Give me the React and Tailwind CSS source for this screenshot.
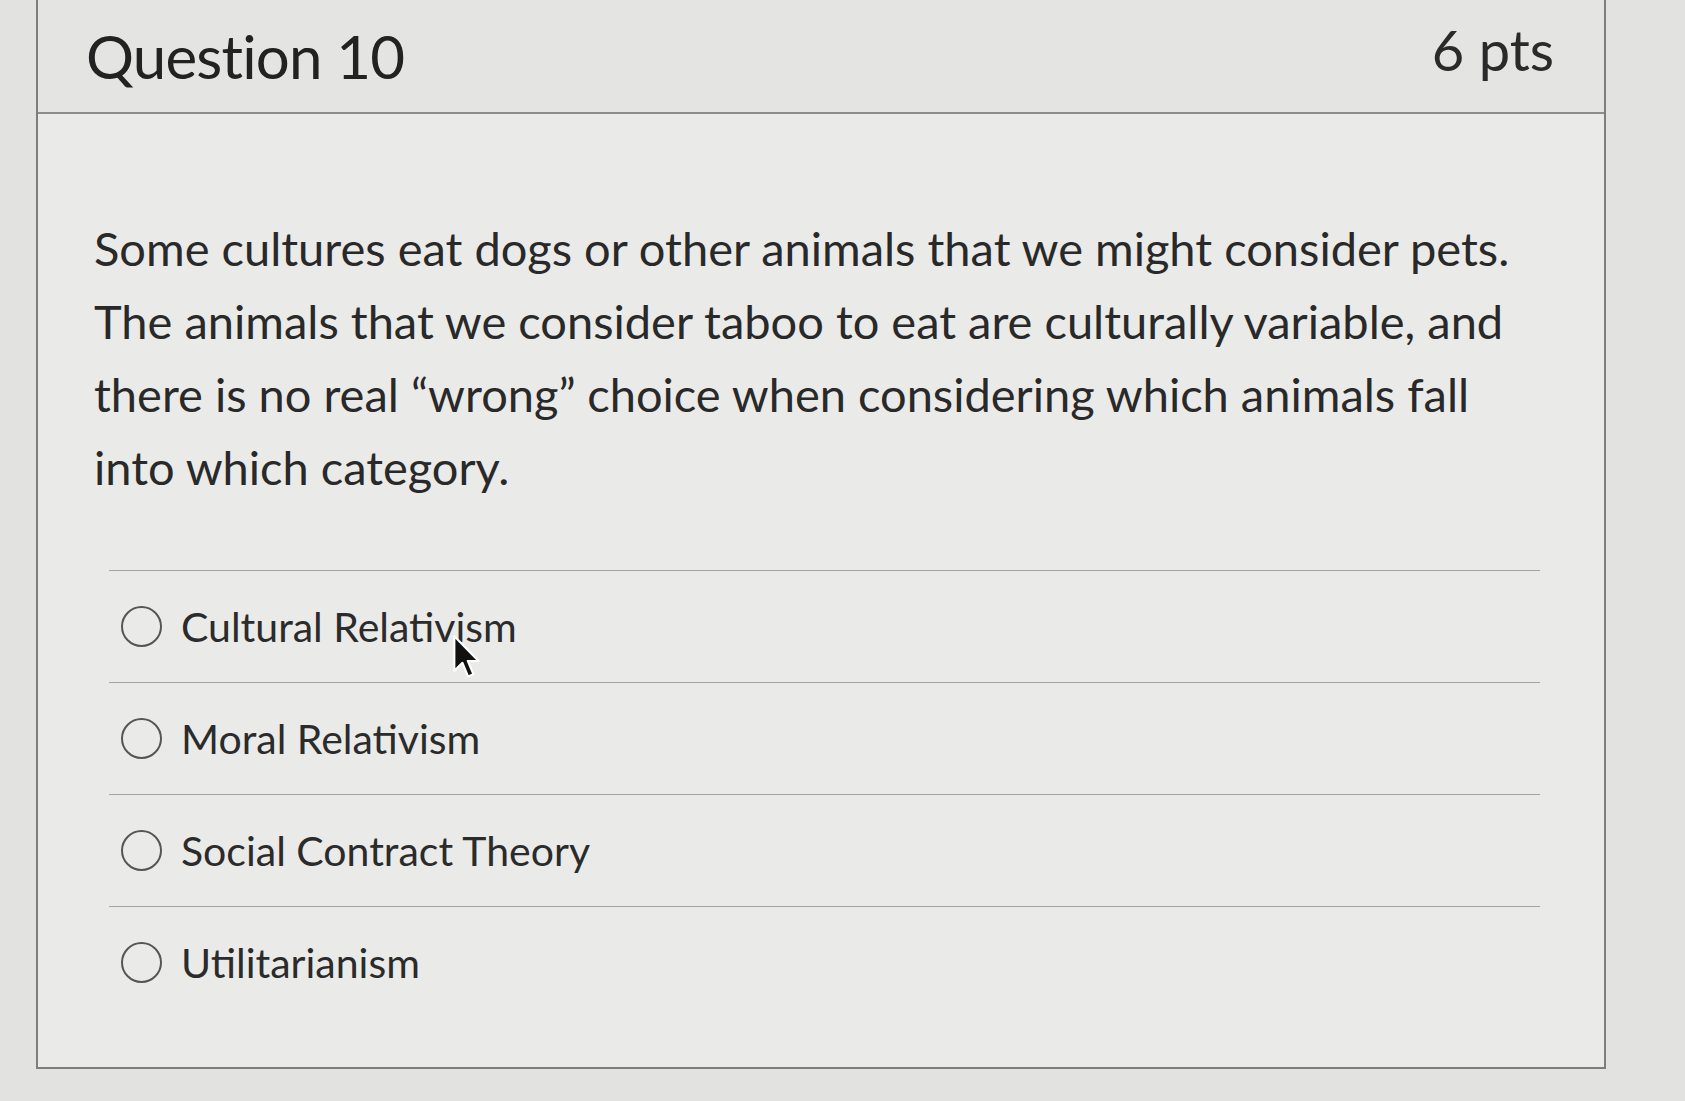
import React from "react";

const options = [
  "Cultural Relativism",
  "Moral Relativism",
  "Social Contract Theory",
  "Utilitarianism",
];

function Cursor() {
  return (
    <svg
      className="absolute left-[452px] top-[634px] w-[30px] h-[46px]"
      viewBox="0 0 13 20"
    >
      <path
        d="M1 1 L1 16 L4.5 12.5 L7 18.5 L9.3 17.5 L6.8 11.7 L11.5 11.7 Z"
        fill="#111"
        stroke="#fff"
        strokeWidth="0.9"
        strokeLinejoin="round"
      />
    </svg>
  );
}

export default function App() {
  return (
    <div
      className="relative h-screen w-full overflow-hidden bg-[#e2e2e0] text-[#252525]"
      style={{ fontFamily: "Lato, 'Open Sans', sans-serif" }}
    >
      <div className="ml-[36px] w-[1570px] h-[1069px] border-x-2 border-b-2 border-[#7d7d7b] bg-[#eaeae8] flex flex-col">
        {/* Header */}
        <div className="h-[114px] shrink-0 flex items-center justify-between pl-[48px] pr-[50px] bg-[#e4e4e2] border-b-2 border-[#8c8c8a]">
          <h1 className="text-[60px] leading-none tracking-[-0.8px] text-[#222]">Question 10</h1>
          <span className="text-[56px] leading-none mb-[12px] text-[#2a2a2a]">6 pts</span>
        </div>

        {/* Body */}
        <div className="pt-[98px] pl-[56px] pr-[40px]">
          <p className="text-[47px] leading-[73px] w-[1450px] text-[#292929]">
            Some cultures eat dogs or other animals that we might consider pets.
            The animals that we consider taboo to eat are culturally variable, and
            there is no real “wrong” choice when considering which animals fall
            into which category.
          </p>

          <div className="mt-[66px] ml-[15px] w-[1431px]">
            {options.map((opt) => (
              <div
                key={opt}
                className="h-[112px] flex items-center gap-[19px] pl-[12px] border-t-[1.5px] border-[#a3a3a1]"
              >
                <span className="w-[41px] h-[41px] rounded-full border-[2.5px] border-[#555553] shrink-0" />
                <span className="text-[41px] leading-none text-[#2b2b2b]">{opt}</span>
              </div>
            ))}
          </div>
        </div>
      </div>
      <Cursor />
    </div>
  );
}
